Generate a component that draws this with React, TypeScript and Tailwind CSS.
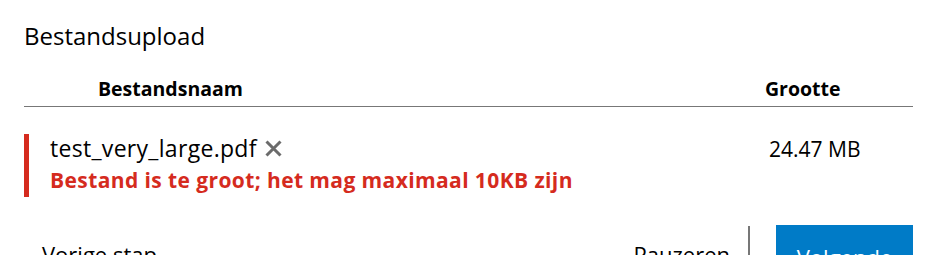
const FONT = { fontFamily: '"Open Sans", "Noto Sans", sans-serif' };

function CloseIcon() {
  return (
    <svg width="17" height="17" viewBox="0 0 17 17" aria-hidden="true">
      <path d="M1.5 1.5 L15.5 15.5 M15.5 1.5 L1.5 15.5" stroke="#6b6b6b" strokeWidth="3" strokeLinecap="butt" />
    </svg>
  );
}

export default function App() {
  return (
    <div className="h-[255px] w-[931px] overflow-hidden bg-white text-[#000]" style={FONT}>
      <div className="pl-[24px] pr-[18px] pt-[20px]">
        <h2 className="text-[24px] leading-[32px]">Bestandsupload</h2>

        <div className="mt-[25px] flex border-b border-[#777] pb-[5px] text-[19.5px] font-bold leading-[24px]">
          <div className="w-[741px] pl-[74px]">Bestandsnaam</div>
          <div>Grootte</div>
        </div>

        <div className="mt-[27px] flex">
          <div className="flex w-[745px] border-l-[5px] border-[#d52b1e] pl-[21px]">
            <div className="pb-[3px]">
              <div className="flex items-center gap-[8px] text-[23px] leading-[28px] tracking-[0.3px]">
                <span>test_very_large.pdf</span>
                <button className="flex items-center">
                  <CloseIcon />
                </button>
              </div>
              <div className="mt-[4px] text-[21px] font-bold leading-[28px] tracking-[0.4px] text-[#d52b1e]">
                Bestand is te groot; het mag maximaal 10KB zijn
              </div>
            </div>
          </div>
          <div className="pt-[1px] text-[21px] leading-[28px]">24.47 MB</div>
        </div>

        <div className="mt-[28px] flex items-start">
          <button className="mt-[15px] pl-[18px] text-[22px] leading-[28px]">Vorige stap</button>
          <div className="flex-1" />
          <button className="mt-[15px] text-[22px] leading-[28px]">Pauzeren</button>
          <div className="ml-[18px] mt-[1px] h-[40px] w-[2px] bg-[#777]" />
          <button className="ml-[26px] h-[48px] w-[137px] bg-[#007bc7] pt-[15px] text-[22px] leading-[28px] text-white">
            Volgende
          </button>
        </div>
      </div>
    </div>
  );
}
